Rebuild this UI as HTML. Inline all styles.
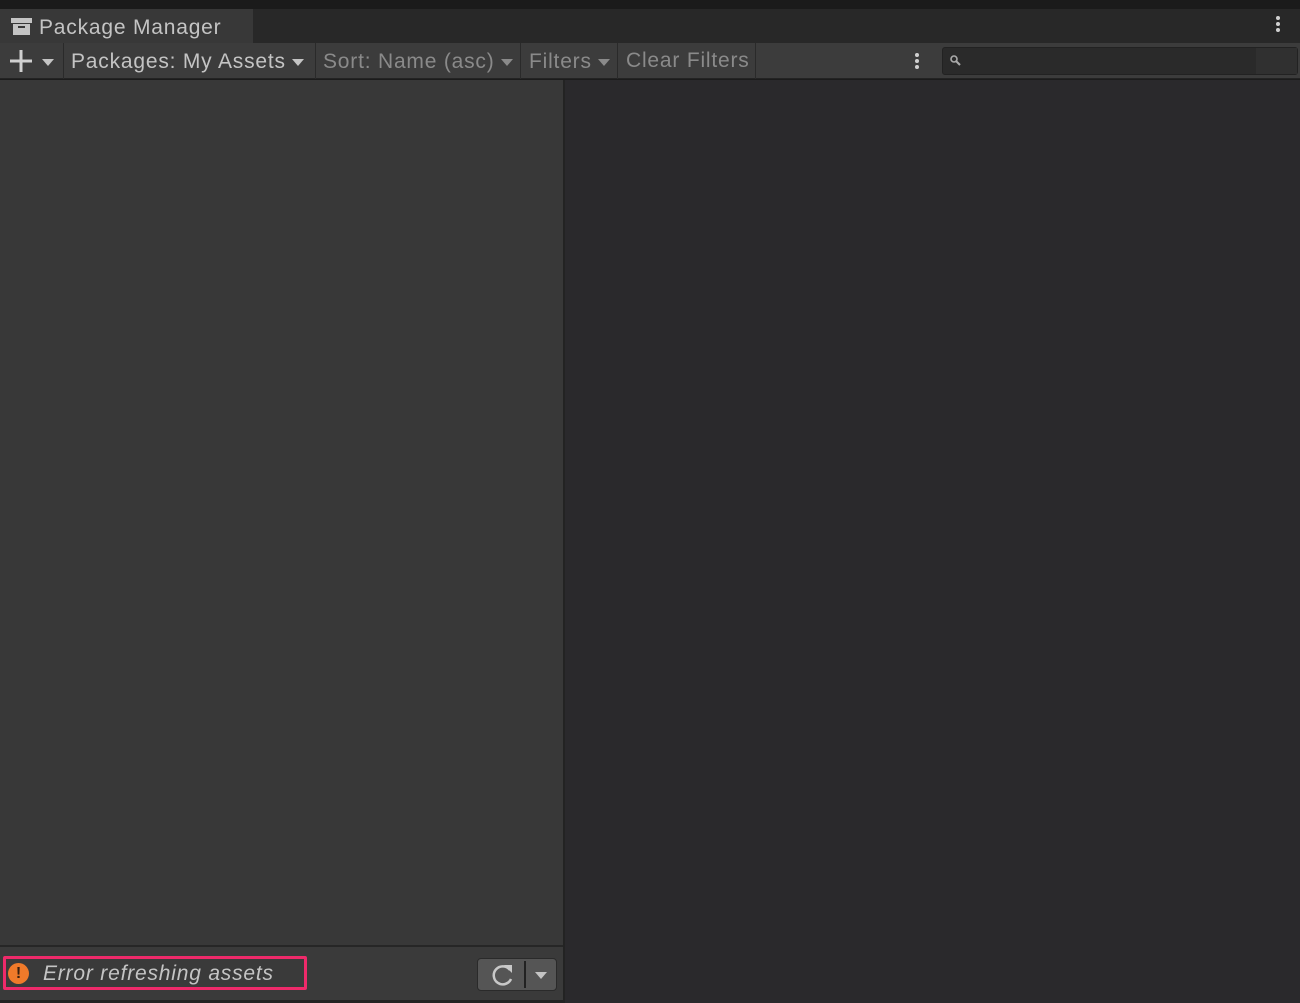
<!DOCTYPE html>
<html><head><style>
*{margin:0;padding:0;box-sizing:border-box}
body{width:1300px;height:1003px;background:#1b1b1b;font-family:"Liberation Sans",sans-serif;position:relative;overflow:hidden}
.a{position:absolute}
.t{color:#c4c4c4;font-size:21px;white-space:nowrap;letter-spacing:0.8px}
.g{color:#8a8a8a}
.tri{display:inline-block;width:0;height:0;border-left:6px solid transparent;border-right:6px solid transparent;border-top:7px solid #c4c4c4;vertical-align:middle}
.dots{width:4px}
.dots i{display:block;width:4px;height:4px;background:#d0d0d0;border-radius:2px;margin-bottom:2px}
</style></head><body>
<div class="a" style="left:0;top:9px;width:1300px;height:34px;background:#282828"></div>
<div class="a" style="left:0;top:9px;width:253px;height:34px;background:#383838"></div>
<svg class="a" style="left:11px;top:18px" width="21" height="18" viewBox="0 0 21 18"><rect x="0" y="0" width="21" height="5" fill="#c4c4c4"/><rect x="2" y="6" width="17" height="11" fill="#c4c4c4"/><rect x="7" y="8" width="7" height="2" fill="#383838"/></svg>
<div class="a t" style="left:39px;top:16px">Package Manager</div>
<div class="a dots" style="left:1276px;top:16px"><i></i><i></i><i></i></div>
<div class="a" style="left:0;top:43px;width:1300px;height:36px;background:#3c3c3c;border-bottom:1px solid #232323"></div>
<div class="a" style="left:63px;top:43px;width:1px;height:36px;background:#2a2a2a"></div>
<div class="a" style="left:315px;top:43px;width:1px;height:36px;background:#2a2a2a"></div>
<div class="a" style="left:520px;top:43px;width:1px;height:36px;background:#2a2a2a"></div>
<div class="a" style="left:617px;top:43px;width:1px;height:36px;background:#2a2a2a"></div>
<div class="a" style="left:755px;top:43px;width:1px;height:36px;background:#2a2a2a"></div>
<svg class="a" style="left:10px;top:50px" width="22" height="22"><rect x="0" y="9.5" width="22" height="3" fill="#d0d0d0"/><rect x="9.5" y="0" width="3" height="22" fill="#d0d0d0"/></svg>
<div class="a" style="left:42px;top:54px"><span class="tri"></span></div>
<div class="a t" style="left:71px;top:50px">Packages: My Assets <span class="tri"></span></div>
<div class="a t g" style="left:323px;top:50px">Sort: Name (asc) <span class="tri" style="border-top-color:#8a8a8a"></span></div>
<div class="a t g" style="left:529px;top:50px">Filters <span class="tri" style="border-top-color:#8a8a8a"></span></div>
<div class="a t g" style="left:626px;top:49px">Clear Filters</div>
<div class="a dots" style="left:915px;top:53px"><i></i><i></i><i></i></div>
<div class="a" style="left:942px;top:47px;width:356px;height:28px;background:#2a2a2a;border:1px solid #222;border-radius:3px"></div>
<div class="a" style="left:1256px;top:48px;width:41px;height:26px;background:#303030"></div>
<svg class="a" style="left:949px;top:54px" width="14" height="14"><circle cx="5" cy="5" r="3" stroke="#aaa" stroke-width="1.6" fill="none"/><line x1="7" y1="7" x2="11" y2="11" stroke="#aaa" stroke-width="2"/></svg>
<div class="a" style="left:0;top:80px;width:563px;height:866px;background:#383838"></div>
<div class="a" style="left:563px;top:80px;width:2px;height:923px;background:#232323"></div>
<div class="a" style="left:565px;top:80px;width:735px;height:923px;background:#2a292c"></div>
<div class="a" style="left:0;top:945px;width:563px;height:2px;background:#262626"></div>
<div class="a" style="left:0;top:947px;width:563px;height:53px;background:#3a3a3a"></div>
<div class="a" style="left:0;top:1000px;width:563px;height:3px;background:#232323"></div>
<div class="a" style="left:3px;top:956px;width:304px;height:34px;border:3px solid #ee2a6a;border-radius:2px"></div>
<div class="a" style="left:8px;top:963px;width:21px;height:21px;border-radius:50%;background:#f07a2a;color:#3a2010;font-weight:bold;font-size:16px;text-align:center;line-height:21px">!</div>
<div class="a t" style="left:43px;top:962px;font-style:italic">Error refreshing assets</div>
<div class="a" style="left:477px;top:958px;width:80px;height:33px;background:#555;border-radius:4px;border:1px solid #2a2a2a"></div>
<div class="a" style="left:524px;top:961px;width:2px;height:27px;background:#222"></div>
<svg class="a" style="left:490px;top:962px" width="26" height="26" viewBox="0 0 26 26"><path d="M20 8 A9 9 0 1 0 21 17" stroke="#c8c8c8" stroke-width="2.5" fill="none"/><path d="M14 3 L22 3 L22 11 Z" fill="#c8c8c8"/></svg>
<div class="a" style="left:535px;top:967px"><span class="tri"></span></div>
</body></html>
